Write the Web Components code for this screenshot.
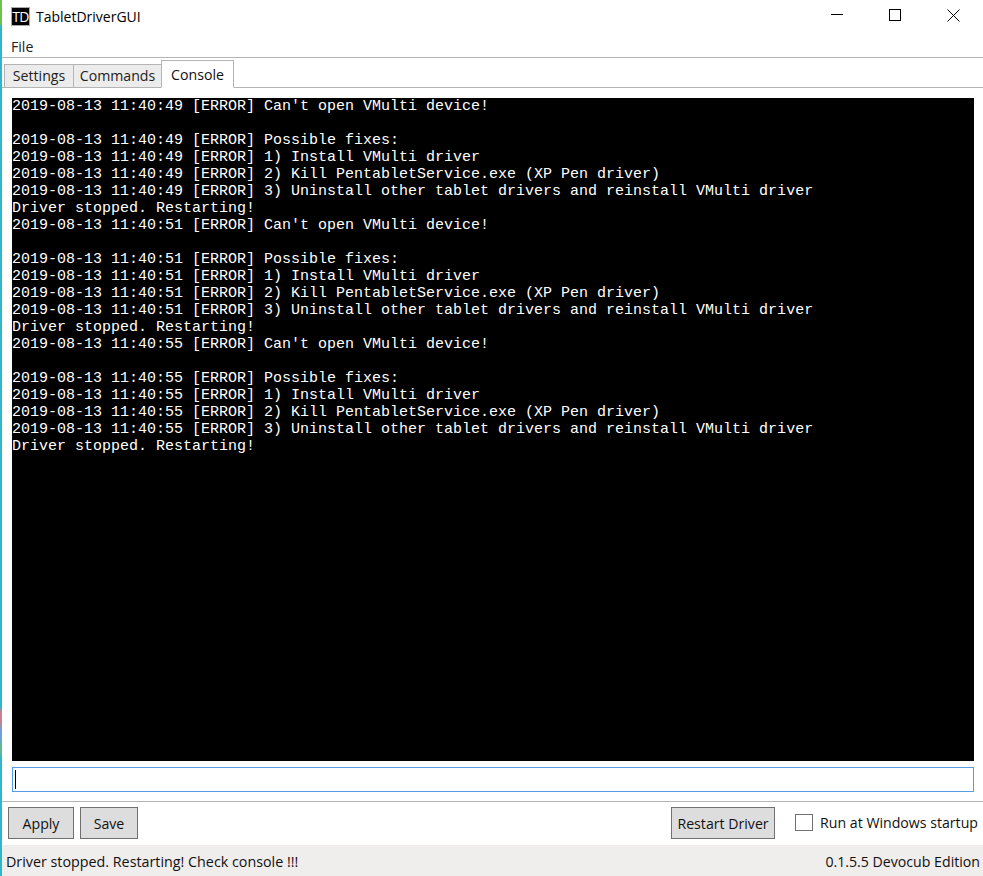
<!DOCTYPE html>
<html><head><meta charset="utf-8"><style>
html,body{margin:0;padding:0;height:100%;overflow:hidden;background:#fff}
body{font-family:"Open Sans","Noto Sans","Liberation Sans",sans-serif;color:#111}
app-window{height:876px}
</style></head><body>
<app-window>
<title-bar title-text="TabletDriverGUI"></title-bar>
<menu-bar><span>File</span></menu-bar>
<tab-strip></tab-strip>
<console-pane></console-pane>
<action-bar></action-bar>
<status-bar left="Driver stopped. Restarting! Check console !!!" right="0.1.5.5 Devocub Edition"></status-bar>
</app-window>
<template id="t-window"><style>
:host{display:flex;flex-direction:column;box-sizing:border-box;padding-left:2px;background:linear-gradient(#6cc24a 0 25px,#2fb6c9 25px 707px,#c9808f 712px 722px,#6f9fe0 730px 738px,#5fb98f 746px 752px,#2fb6c9 758px);width:983px}
.in{flex:1;display:flex;flex-direction:column;background:#fff;min-height:0}
</style><div class="in"><slot></slot></div></template>
<script>
const def=(name,html,init)=>customElements.define(name,class extends HTMLElement{
 constructor(){super();this.attachShadow({mode:'open'}).innerHTML=html;}
 connectedCallback(){init&&init(this,this.shadowRoot)}
});
const tpl=document.getElementById('t-window').innerHTML;
def('app-window',tpl);
def('title-bar',`<style>
:host{display:flex;align-items:center;height:33px;background:#fff;font-size:14px;color:#000}
.logo{width:19px;height:19px;background:#000;color:#fff;font-size:14px;line-height:17px;text-align:center;margin-left:9px;letter-spacing:-.8px;box-sizing:border-box;border:1px solid #aaa;margin-top:-1px;overflow:hidden}
.t{margin-left:6px;flex:1}
.c{width:58px;height:30px;display:flex;align-items:center;justify-content:center}
.controls{display:flex;padding:0 1px 3px 0}
svg{display:block}
</style><div class="logo">TD</div><div class="t"></div>
<div class="controls">
<div class="c"><svg width="12" height="12"><path d="M0 5.5H12" stroke="#000"/></svg></div>
<div class="c"><svg width="12" height="12"><rect x=".5" y=".5" width="11" height="11" fill="none" stroke="#000"/></svg></div>
<div class="c"><svg width="13" height="13"><path d="M.5.5L12.5 12.5M12.5.5L.5 12.5" stroke="#000" fill="none"/></svg></div>
</div>`,(h,s)=>{s.querySelector('.t').textContent=h.getAttribute('title-text')});
def('menu-bar',`<style>
:host{display:block;height:25px;box-sizing:border-box;border-bottom:1px solid #b4b4b4;font-size:14.15px;line-height:27px;padding-left:9px;color:#222}
</style><slot></slot>`);
def('tab-strip',`<style>
:host{display:flex;align-items:flex-end;height:30px;box-sizing:border-box;border-bottom:1px solid #b4b4b4;padding-left:2px;font-size:14.15px;color:#222}
.t{box-sizing:border-box;height:24px;margin-bottom:-1px;border:1px solid #b4b4b4;background:#ececec;line-height:22px;text-align:center;margin-right:-1px}
.a{height:28px;background:#fff;border-bottom:1px solid #fff;line-height:27px;position:relative;z-index:1;margin-right:0;color:#111}
</style><div class="t" style="width:70px">Settings</div><div class="t" style="width:89px">Commands</div><div class="t a" style="width:73px">Console</div>`);
def('console-line',`<style>:host{display:block;height:17px;white-space:pre}</style><slot></slot>`);
def('console-pane',`<style>
:host{display:flex;flex-direction:column;height:714px;box-sizing:border-box;padding:10px 9px 0 10px;border-bottom:1px solid #b4b4b4}
.log{height:663px;background:#000;color:#fff;font:15px/17px "Liberation Mono",monospace;box-sizing:border-box;overflow:hidden}
.input{margin-top:6px;height:25px;box-sizing:border-box;border:1px solid #569de5;position:relative}
.caret{position:absolute;left:2px;top:2px;width:1px;height:19px;background:#000}
</style><div class="log"></div><div class="input"><div class="caret"></div></div>`,(h,s)=>{
 const log=s.querySelector('.log');
 const add=t=>{const l=document.createElement('console-line');l.textContent=t;log.appendChild(l)};
 for(const sec of ['49','51','55']){
  const p=`2019-08-13 11:40:${sec} [ERROR] `;
  add(p+"Can't open VMulti device!");add('');add(p+'Possible fixes:');add(p+'1) Install VMulti driver');
  add(p+'2) Kill PentabletService.exe (XP Pen driver)');add(p+'3) Uninstall other tablet drivers and reinstall VMulti driver');add('Driver stopped. Restarting!');
 }
});
def('win-button',`<style>
:host{display:block;box-sizing:border-box;height:32px;border:1px solid #707070;background:#ddd;font-size:14.15px;line-height:32px;text-align:center;color:#111}
</style><slot></slot>`);
def('win-check',`<style>
:host{display:flex;align-items:center;gap:7px;font-size:14.15px;color:#111}
.b{width:18px;height:17px;box-sizing:border-box;border:1px solid #707070;background:#fff}
</style><div class="b"></div><slot></slot>`);
def('action-bar',`<style>
:host{display:flex;align-items:flex-start;height:43px;box-sizing:border-box;padding:5px 5px 0 6px;color:#111}
.s{flex:1}
win-button{margin-right:6px}
win-check{height:30px}
</style><win-button style="width:66px">Apply</win-button><win-button style="width:58px">Save</win-button><div class="s"></div><win-button style="width:104px;margin-right:20px">Restart Driver</win-button><win-check>Run at Windows startup</win-check>`);
def('status-bar',`<style>
:host{display:flex;justify-content:space-between;align-items:center;height:31px;box-sizing:border-box;padding:1px 3px 0 4px;background:#f0eded;font-size:14.15px;color:#111}
.l{font-size:14.3px}
</style><span class="l"></span><span class="r"></span>`,(h,s)=>{s.querySelector('.l').textContent=h.getAttribute('left');s.querySelector('.r').textContent=h.getAttribute('right')});
</script>
</body></html>
